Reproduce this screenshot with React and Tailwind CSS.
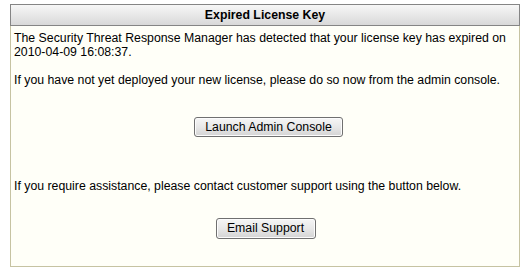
import React from 'react';

function WinButton({ children, className }) {
    return (
        <button className={"rounded-[3px] border border-[#707070] bg-gradient-to-b from-[#f6f6f6] via-[#e8e8e8] to-[#d4d4d4] text-[12.3px] leading-none text-black shadow-[inset_0_0_0_1px_#fcfcfc] " + className}>
            {children}
        </button>
    );
}

export default function App() {
    return (
        <div className="w-[525px] h-[274px] bg-white pt-[4px] pl-[10px] font-['Liberation_Sans',Arial,sans-serif] text-[12.3px] text-black">
            <div className="w-[510px]">
                <div className="h-[22px] border border-[#858585] bg-gradient-to-b from-[#f7f7f7] to-[#d9d9d9] flex items-center justify-center font-bold text-[12.3px]">
                    Expired License Key
                </div>
                <div className="h-[241px] border border-t-0 border-[#c6c3a2] bg-[#fffff8] pt-[5px] px-[3px] leading-[14px]">
                    <p>
                        The Security Threat Response Manager has detected that your license key has expired on 2010-04-09 16:08:37.
                        <br />
                        <br />
                        If you have not yet deployed your new license, please do so now from the admin console.
                    </p>
                    <div className="flex justify-center mt-[30px] pl-[7px]">
                        <WinButton className="w-[149px] h-[20px]">Launch Admin Console</WinButton>
                    </div>
                    <p className="mt-[42px]">
                        If you require assistance, please contact customer support using the button below.
                    </p>
                    <div className="flex justify-center mt-[25px] pl-[1px]">
                        <WinButton className="w-[100px] h-[21px]">Email Support</WinButton>
                    </div>
                </div>
            </div>
        </div>
    );
}
